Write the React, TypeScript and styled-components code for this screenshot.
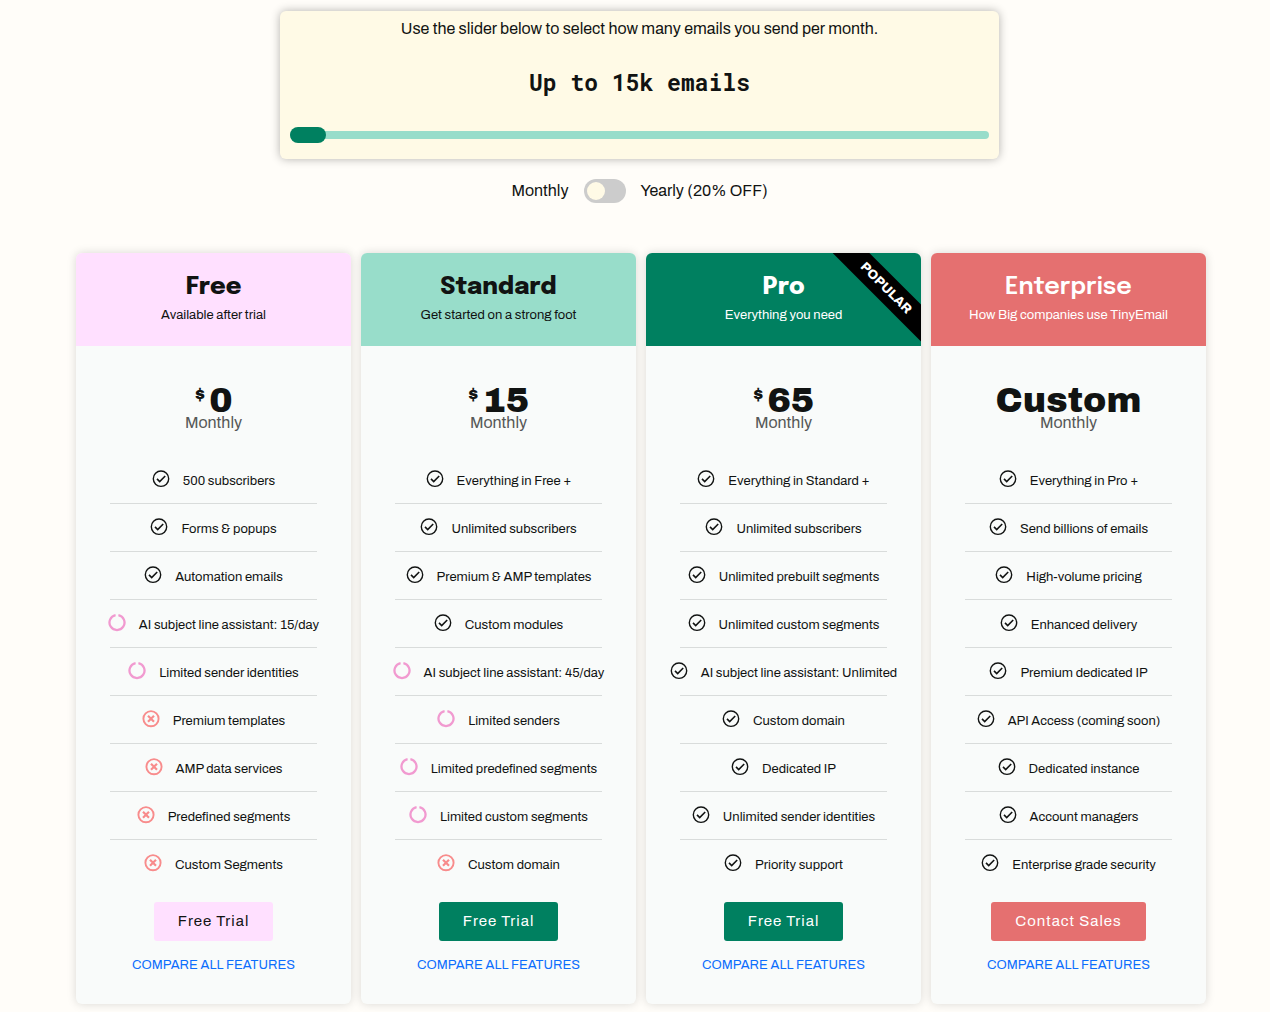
import React, { useState } from 'react';
import styled, { createGlobalStyle } from 'styled-components';

const GlobalStyle = createGlobalStyle`
  * { box-sizing: border-box; }
  body {
    margin: 0;
    background: #fffdf9;
    color: #111312;
    font-family: Archivo, "Liberation Sans", Arial, sans-serif;
    font-size: 16px;
    line-height: 24px;
  }
`;

const Page = styled.main`
  padding: 11px 0 8px 9px;
`;

const SliderPanel = styled.section`
  max-width: 719px;
  margin: 0 auto;
  padding: 6px 10px 16px;
  display: flex;
  flex-direction: column;
  align-items: center;
  border-radius: 6px;
  background: #fffae6;
  box-shadow: 0 0 10px rgba(0, 0, 0, 0.3);
  text-align: center;
`;

const Volume = styled.output`
  margin: 25px 0 29px;
  font-family: "Roboto Mono", "DejaVu Sans Mono", monospace;
  font-size: 23px;
  line-height: 32px;
  font-weight: 700;
`;

const Range = styled.input`
  appearance: none;
  width: 100%;
  height: 16px;
  margin: 0;
  background: transparent;
  cursor: pointer;

  &::-webkit-slider-runnable-track {
    height: 8px;
    border-radius: 4px;
    background: #98ddca;
  }
  &::-webkit-slider-thumb {
    appearance: none;
    width: 36px;
    height: 16px;
    margin-top: -4px;
    border-radius: 8px;
    background: #008060;
  }
`;

const Billing = styled.label`
  display: flex;
  justify-content: center;
  align-items: center;
  gap: 15px;
  margin: 20px 0 50px;
  cursor: pointer;
`;

const Switch = styled.input`
  appearance: none;
  width: 42px;
  height: 24px;
  margin: 0;
  padding: 3px;
  border-radius: 12px;
  background: #ccc;

  &::before {
    content: "";
    display: block;
    width: 18px;
    height: 18px;
    border-radius: 50%;
    background: #fffae6;
  }
  &:checked { background: #008060; }
  &:checked::before { margin-left: 18px; }
`;

const Plans = styled.section`
  max-width: 1133px;
  margin: 0 auto;
  padding-left: 3px;
  display: grid;
  grid-template-columns: repeat(4, 1fr);
  gap: 10px;
`;

const Card = styled.article`
  position: relative;
  overflow: hidden;
  display: flex;
  flex-direction: column;
  align-items: center;
  padding-bottom: 27px;
  border-radius: 6px;
  background: #f9fbfa;
  box-shadow: 0 0 10px rgba(0, 0, 0, 0.15);
  text-align: center;
`;

const CardHeader = styled.header<{ $bg: string; $fg: string }>`
  align-self: stretch;
  padding: 18px 0 21px;
  background: ${(p) => p.$bg};
  color: ${(p) => p.$fg};
`;

const PlanName = styled.h2<{ $weight: number }>`
  margin: 0 0 1px;
  font-family: Epilogue, Inter, sans-serif;
  font-size: 24px;
  line-height: 33px;
  font-weight: ${(p) => p.$weight};
`;

const Tagline = styled.p`
  margin: 0;
  font-size: 13px;
  line-height: 20px;
`;

const Ribbon = styled.span`
  position: absolute;
  top: 22px;
  right: -45px;
  width: 160px;
  transform: rotate(45deg);
  background: #000;
  color: #fff;
  font-size: 13px;
  line-height: 26px;
  font-weight: 800;
`;

const Price = styled.p`
  display: flex;
  align-items: flex-start;
  gap: 4px;
  margin: 41px 0 0;
  font-family: "Archivo Black", Inter, sans-serif;
  font-size: 35px;
  line-height: 27px;
  font-weight: 400;
`;

const Currency = styled.sup`
  font-size: 16px;
  line-height: 16px;
`;

const Period = styled.p`
  margin: 0 0 24px;
  line-height: 18px;
  color: #555756;
`;

const Features = styled.ul`
  width: 75%;
  margin: 0 0 14px;
  padding: 0;
  list-style: none;
`;

const Feature = styled.li`
  display: flex;
  justify-content: center;
  align-items: center;
  gap: 13px;
  height: 48px;
  padding-top: 2px;
  border-bottom: 1px solid #d9dcdb;
  font-size: 13px;
  white-space: nowrap;

  &:last-child { border-bottom-color: transparent; }
`;

const Mark = styled.svg<{ $tone: string }>`
  flex: none;
  width: 18px;
  height: 18px;
  margin-bottom: 4px;
  fill: none;
  stroke: ${(p) => p.$tone};
`;

const Action = styled.button<{ $bg: string; $fg: string }>`
  height: 39px;
  padding: 0 24px 2px;
  border: 0;
  border-radius: 3px;
  background: ${(p) => p.$bg};
  color: ${(p) => p.$fg};
  font: inherit;
  font-size: 15px;
  letter-spacing: 1px;
  cursor: pointer;
`;

const Compare = styled.a`
  margin-top: 12px;
  color: #0d6efd;
  font-size: 13px;
  text-decoration: none;
`;

type Status = 'yes' | 'part' | 'no';

const tones: Record<Status, string> = { yes: '#111312', part: '#f19ad0', no: '#f88c8c' };

function StatusMark({ status }: { status: Status }) {
  return (
    <Mark viewBox="0 0 18 18" $tone={tones[status]} aria-hidden="true">
      {status === 'yes' && (
        <>
          <circle cx="9" cy="8.7" r="7.7" strokeWidth="1.4" />
          <path d="M5 8.9 7.7 11.6l5.5-5.6" strokeWidth="1.6" />
        </>
      )}
      {status === 'part' && <path d="M10.4 1.2a7.5 7.5 0 1 1-2.8 0" strokeWidth="2.3" />}
      {status === 'no' && (
        <>
          <circle cx="9" cy="8.7" r="7.6" strokeWidth="1.9" />
          <path d="m6 5.7 6 6m0-6-6 6" strokeWidth="2.2" />
        </>
      )}
    </Mark>
  );
}

interface Plan {
  name: string;
  weight: number;
  tagline: string;
  price: string;
  currency?: boolean;
  popular?: boolean;
  header: [string, string];
  button: [string, string];
  action: string;
  features: [Status, string][];
}

const plans: Plan[] = [
  {
    name: 'Free',
    weight: 800,
    tagline: 'Available after trial',
    price: '0',
    currency: true,
    header: ['#ffe0ff', '#111312'],
    button: ['#ffe0ff', '#111312'],
    action: 'Free Trial',
    features: [
      ['yes', '500 subscribers'],
      ['yes', 'Forms & popups'],
      ['yes', 'Automation emails'],
      ['part', 'AI subject line assistant: 15/day'],
      ['part', 'Limited sender identities'],
      ['no', 'Premium templates'],
      ['no', 'AMP data services'],
      ['no', 'Predefined segments'],
      ['no', 'Custom Segments'],
    ],
  },
  {
    name: 'Standard',
    weight: 800,
    tagline: 'Get started on a strong foot',
    price: '15',
    currency: true,
    header: ['#98ddca', '#111312'],
    button: ['#008060', '#fff'],
    action: 'Free Trial',
    features: [
      ['yes', 'Everything in Free +'],
      ['yes', 'Unlimited subscribers'],
      ['yes', 'Premium & AMP templates'],
      ['yes', 'Custom modules'],
      ['part', 'AI subject line assistant: 45/day'],
      ['part', 'Limited senders'],
      ['part', 'Limited predefined segments'],
      ['part', 'Limited custom segments'],
      ['no', 'Custom domain'],
    ],
  },
  {
    name: 'Pro',
    weight: 800,
    tagline: 'Everything you need',
    price: '65',
    currency: true,
    popular: true,
    header: ['#008060', '#fff'],
    button: ['#008060', '#fff'],
    action: 'Free Trial',
    features: [
      ['yes', 'Everything in Standard +'],
      ['yes', 'Unlimited subscribers'],
      ['yes', 'Unlimited prebuilt segments'],
      ['yes', 'Unlimited custom segments'],
      ['yes', 'AI subject line assistant: Unlimited'],
      ['yes', 'Custom domain'],
      ['yes', 'Dedicated IP'],
      ['yes', 'Unlimited sender identities'],
      ['yes', 'Priority support'],
    ],
  },
  {
    name: 'Enterprise',
    weight: 600,
    tagline: 'How Big companies use TinyEmail',
    price: 'Custom',
    header: ['#e57070', '#fff'],
    button: ['#e57070', '#fff'],
    action: 'Contact Sales',
    features: [
      ['yes', 'Everything in Pro +'],
      ['yes', 'Send billions of emails'],
      ['yes', 'High-volume pricing'],
      ['yes', 'Enhanced delivery'],
      ['yes', 'Premium dedicated IP'],
      ['yes', 'API Access (coming soon)'],
      ['yes', 'Dedicated instance'],
      ['yes', 'Account managers'],
      ['yes', 'Enterprise grade security'],
    ],
  },
];

const volumes = ['15k', '25k', '50k', '100k', '250k', '500k'];

export default function App() {
  const [step, setStep] = useState(0);
  return (
    <>
      <GlobalStyle />
      <Page>
        <SliderPanel>
          <label htmlFor="volume">
            Use the slider below to select how many emails you send per month.
          </label>
          <Volume htmlFor="volume">Up to {volumes[step]} emails</Volume>
          <Range
            id="volume"
            type="range"
            min={0}
            max={volumes.length - 1}
            value={step}
            onChange={(e) => setStep(Number(e.target.value))}
          />
        </SliderPanel>
        <Billing>
          <span>Monthly</span>
          <Switch type="checkbox" role="switch" />
          <span>Yearly (20% OFF)</span>
        </Billing>
        <Plans>
          {plans.map((plan) => (
            <Card key={plan.name}>
              <CardHeader $bg={plan.header[0]} $fg={plan.header[1]}>
                <PlanName $weight={plan.weight}>{plan.name}</PlanName>
                <Tagline>{plan.tagline}</Tagline>
              </CardHeader>
              {plan.popular && <Ribbon>POPULAR</Ribbon>}
              <Price>
                {plan.currency && <Currency>$</Currency>}
                <span>{plan.price}</span>
              </Price>
              <Period>Monthly</Period>
              <Features>
                {plan.features.map(([status, text]) => (
                  <Feature key={text}>
                    <StatusMark status={status} />
                    <span>{text}</span>
                  </Feature>
                ))}
              </Features>
              <Action type="button" $bg={plan.button[0]} $fg={plan.button[1]}>
                {plan.action}
              </Action>
              <Compare href="#compare">COMPARE ALL FEATURES</Compare>
            </Card>
          ))}
        </Plans>
      </Page>
    </>
  );
}
